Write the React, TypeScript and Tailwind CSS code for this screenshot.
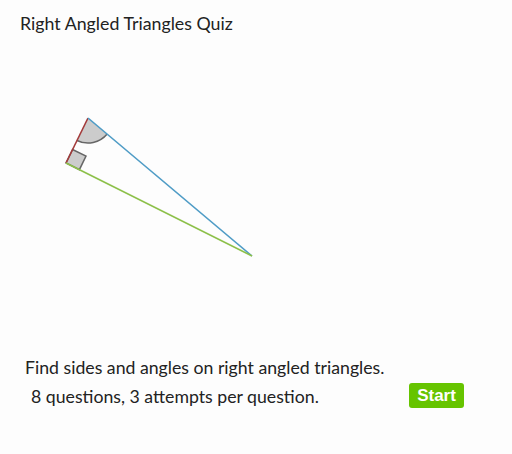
import React from "react";

// Right angled triangle preview with angle markers.
function TriangleDiagram() {
  return (
    <svg width="512" height="300" viewBox="0 0 512 300" className="block">
      {/* right-angle square at B */}
      <polygon
        points="66,163 72.6,149.5 86.0,156.2 79.4,169.7"
        fill="#cccccc"
        stroke="#666666"
        strokeWidth="1.5"
      />
      {/* angle arc at A */}
      <path
        d="M88,118 L77.0,140.5 A25,25 0 0 0 107.2,134.1 Z"
        fill="#cccccc"
        stroke="none"
      />
      <path
        d="M77.0,140.5 A25,25 0 0 0 107.2,134.1"
        fill="none"
        stroke="#666666"
        strokeWidth="1.5"
      />
      <line x1="88" y1="118" x2="66" y2="163" stroke="#a33a3a" strokeWidth="1.6" />
      <line x1="88" y1="118" x2="252" y2="256" stroke="#4f9cc6" strokeWidth="1.6" />
      <line x1="66" y1="163" x2="252" y2="256" stroke="#8dc04a" strokeWidth="1.6" />
    </svg>
  );
}

export default function App() {
  return (
    <div
      className="flex h-[454px] w-[512px] flex-col bg-[#fdfdfd] text-[#222]"
      style={{ fontFamily: "Lato, 'Open Sans', sans-serif" }}
    >
      <h1 className="pl-[20px] pt-[12px] text-[17.8px] leading-[22px]">Right Angled Triangles Quiz</h1>
      <div className="mt-[-34px]">
        <TriangleDiagram />
      </div>
      <div className="mt-[57px] pl-[25px] pr-[48px] text-[17.7px]">
        <p className="leading-[22px]">Find sides and angles on right angled triangles.</p>
        <div className="mt-[7px] flex items-start justify-between">
          <p className="pl-[6px] leading-[22px]">8 questions, 3 attempts per question.</p>
          <button
            className="mt-[-3px] h-[25px] w-[55px] rounded-[3px] bg-[#66c400] text-[17px] font-bold leading-none text-white"
            style={{ fontFamily: "'Liberation Sans', Arial, sans-serif" }}
          >
            Start
          </button>
        </div>
      </div>
    </div>
  );
}
